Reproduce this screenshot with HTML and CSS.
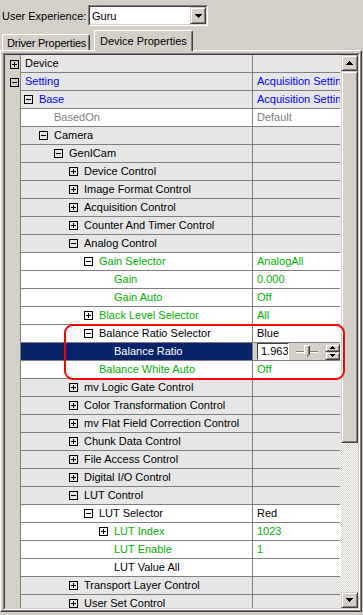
FILE: index.html
```html
<!DOCTYPE html>
<html lang="en">
<head>
    <meta charset="UTF-8">
    <title>Device Properties</title>
    <link rel="stylesheet" href="styles.css">
</head>
<body>
    <div class="toolbar">
        <label>User Experience:</label>
        <div class="combo">
            <div class="combo-inner">
                <span class="combo-text">Guru</span>
                <span class="btn combo-btn"><svg width="7" height="4"><path d="M0 0h7v1H0zM1 1h5v1H1zM2 2h3v1H2zM3 3h1v1H3z"/></svg></span>
            </div>
        </div>
    </div>

    <div class="tabs">
        <div class="tab">Driver Properties</div>
        <div class="tab active">Device Properties</div>
    </div>

    <div class="panel">
        <div class="frame">
            <div class="frame-inner">
                <div class="grid">
                    <div class="row cat"><div class="gutter"><span class="exp plus"></span></div><div class="name l0">Device</div><div class="value"></div></div>
                    <div class="row cat"><div class="gutter"><span class="exp"></span></div><div class="name l0 blue">Setting</div><div class="value blue">Acquisition Setting</div></div>
                    <div class="row cat"><div class="gutter"></div><div class="name l1 blue"><span class="exp"></span>Base</div><div class="value blue">Acquisition Setting</div></div>
                    <div class="row"><div class="gutter"></div><div class="name l2 gray"><span class="leaf"></span>BasedOn</div><div class="value gray">Default</div></div>
                    <div class="row cat"><div class="gutter"></div><div class="name l2"><span class="exp"></span>Camera</div><div class="value"></div></div>
                    <div class="row cat"><div class="gutter"></div><div class="name l3"><span class="exp"></span>GenICam</div><div class="value"></div></div>
                    <div class="row cat"><div class="gutter"></div><div class="name l4"><span class="exp plus"></span>Device Control</div><div class="value"></div></div>
                    <div class="row cat"><div class="gutter"></div><div class="name l4"><span class="exp plus"></span>Image Format Control</div><div class="value"></div></div>
                    <div class="row cat"><div class="gutter"></div><div class="name l4"><span class="exp plus"></span>Acquisition Control</div><div class="value"></div></div>
                    <div class="row cat"><div class="gutter"></div><div class="name l4"><span class="exp plus"></span>Counter And Timer Control</div><div class="value"></div></div>
                    <div class="row cat"><div class="gutter"></div><div class="name l4"><span class="exp"></span>Analog Control</div><div class="value"></div></div>
                    <div class="row"><div class="gutter"></div><div class="name l5 green"><span class="exp"></span>Gain Selector</div><div class="value green">AnalogAll</div></div>
                    <div class="row"><div class="gutter"></div><div class="name l6 green"><span class="leaf"></span>Gain</div><div class="value green">0.000</div></div>
                    <div class="row"><div class="gutter"></div><div class="name l6 green"><span class="leaf"></span>Gain Auto</div><div class="value green">Off</div></div>
                    <div class="row"><div class="gutter"></div><div class="name l5 green"><span class="exp plus"></span>Black Level Selector</div><div class="value green">All</div></div>
                    <div class="row"><div class="gutter"></div><div class="name l5"><span class="exp"></span>Balance Ratio Selector</div><div class="value">Blue</div></div>
                    <div class="row selected"><div class="gutter"></div><div class="name l6"><span class="leaf"></span>Balance Ratio</div>
                        <div class="value editor">
                            <div class="edit"><span class="caret"></span>1.963</div>
                            <svg class="slider" width="22" height="14" viewBox="0 0 22 14">
                                <path d="M0 6h22v1H0z" fill="#808080"/>
                                <path d="M0 7h22v1H0z" fill="#fff"/>
                                <path d="M8 0h6v9l-3 3-3-3z" fill="#d4d0c8"/>
                                <path d="M8 0h6v1H9v8H8z" fill="#fff"/>
                                <path d="M13 1h1v8l-3 3v-1l2-2z" fill="#404040"/>
                                <path d="M12 1h1v8l-2 2v-1l1-1z" fill="#808080"/>
                            </svg>
                            <div class="spin">
                                <span class="btn spin-btn"><svg width="5" height="3"><path d="M2 0h1v1H2zM1 1h3v1H1zM0 2h5v1H0z"/></svg></span>
                                <span class="btn spin-btn"><svg width="5" height="3"><path d="M0 0h5v1H0zM1 1h3v1H1zM2 2h1v1H2z"/></svg></span>
                            </div>
                        </div>
                    </div>
                    <div class="row"><div class="gutter"></div><div class="name l5 green"><span class="leaf"></span>Balance White Auto</div><div class="value green">Off</div></div>
                    <div class="row cat"><div class="gutter"></div><div class="name l4"><span class="exp plus"></span>mv Logic Gate Control</div><div class="value"></div></div>
                    <div class="row cat"><div class="gutter"></div><div class="name l4"><span class="exp plus"></span>Color Transformation Control</div><div class="value"></div></div>
                    <div class="row cat"><div class="gutter"></div><div class="name l4"><span class="exp plus"></span>mv Flat Field Correction Control</div><div class="value"></div></div>
                    <div class="row cat"><div class="gutter"></div><div class="name l4"><span class="exp plus"></span>Chunk Data Control</div><div class="value"></div></div>
                    <div class="row cat"><div class="gutter"></div><div class="name l4"><span class="exp plus"></span>File Access Control</div><div class="value"></div></div>
                    <div class="row cat"><div class="gutter"></div><div class="name l4"><span class="exp plus"></span>Digital I/O Control</div><div class="value"></div></div>
                    <div class="row cat"><div class="gutter"></div><div class="name l4"><span class="exp"></span>LUT Control</div><div class="value"></div></div>
                    <div class="row"><div class="gutter"></div><div class="name l5"><span class="exp"></span>LUT Selector</div><div class="value">Red</div></div>
                    <div class="row"><div class="gutter"></div><div class="name l6 green"><span class="exp plus"></span>LUT Index</div><div class="value green">1023</div></div>
                    <div class="row"><div class="gutter"></div><div class="name l6 green"><span class="leaf"></span>LUT Enable</div><div class="value green">1</div></div>
                    <div class="row"><div class="gutter"></div><div class="name l6"><span class="leaf"></span>LUT Value All</div><div class="value"></div></div>
                    <div class="row cat"><div class="gutter"></div><div class="name l4"><span class="exp plus"></span>Transport Layer Control</div><div class="value"></div></div>
                    <div class="row cat"><div class="gutter"></div><div class="name l4"><span class="exp plus"></span>User Set Control</div><div class="value"></div></div>
                </div>

                <div class="scrollbar">
                    <span class="btn sb-btn"><svg width="7" height="4"><path d="M3 0h1v1H3zM2 1h3v1H2zM1 2h5v1H1zM0 3h7v1H0z"/></svg></span>
                    <span class="btn sb-thumb"></span>
                    <span class="sb-track"></span>
                    <span class="btn sb-btn"><svg width="7" height="4"><path d="M0 0h7v1H0zM1 1h5v1H1zM2 2h3v1H2zM3 3h1v1H3z"/></svg></span>
                </div>

                <!-- highlight drawn over the balance ratio rows -->
                <div class="mark"></div>
            </div>
        </div>
    </div>
</body>
</html>
```

FILE: styles.css
```css
body {
    margin: 0;
    width: 363px;
    height: 615px;
    overflow: hidden;
    background-color: #d4d0c8;
    font-family: "Liberation Sans", Arial, sans-serif;
    font-size: 11px;
    color: #000;
}

/* raised 3d look used by buttons, thumb */
.btn {
    box-sizing: border-box;
    display: flex;
    align-items: center;
    justify-content: center;
    background-color: #d4d0c8;
    border: 1px solid;
    border-color: #d4d0c8 #404040 #404040 #d4d0c8;
    box-shadow: inset 1px 1px #fff, inset -1px -1px #808080;
}

.toolbar {
    display: flex;
    align-items: center;
    height: 21px;
    padding: 5px 0 0 2px;
}
.toolbar label {
    width: 86px;
}
.combo {
    box-sizing: border-box;
    width: 120px;
    height: 21px;
    border: 1px solid;
    border-color: #808080 #fff #fff #808080;
}
.combo-inner {
    box-sizing: border-box;
    height: 100%;
    display: flex;
    align-items: center;
    background-color: #fff;
    border: 1px solid;
    border-color: #404040 #d4d0c8 #d4d0c8 #404040;
}
.combo-text {
    flex: 1;
    padding-left: 2px;
}
.combo-btn {
    width: 16px;
    height: 17px;
}

.tabs {
    position: relative;
    z-index: 1;
    display: flex;
    align-items: flex-end;
    height: 20px;
    margin-top: 4px;
    padding-left: 2px;
}
.tab {
    box-sizing: border-box;
    width: 88px;
    height: 16px;
    padding: 1px 0 0 4px;
    display: flex;
    align-items: center;
    border: 1px solid;
    border-color: #fff #404040 #d4d0c8 #fff;
    border-bottom: none;
    border-radius: 2px 2px 0 0;
    box-shadow: inset -1px 0 #808080;
    white-space: nowrap;
    letter-spacing: -0.2px;
    overflow: hidden;
}
.tab.active {
    width: 99px;
    height: 21px;
    margin-left: 4px;
    margin-bottom: -1px;
    padding: 0 0 1px 5px;
    letter-spacing: 0;
    background-color: #d4d0c8;
}

.panel {
    width: 362px;
    box-sizing: border-box;
    padding: 2px 1px 1px 2px;
    border: 1px solid;
    border-color: #fff #404040 #404040 #fff;
    box-shadow: inset -1px -1px #808080;
}
.frame {
    border: 1px solid;
    border-color: #808080 #fff #fff #808080;
}
.frame-inner {
    position: relative;
    display: flex;
    height: 553px;
    overflow: hidden;
    border: 1px solid;
    border-color: #404040 #d4d0c8 #d4d0c8 #404040;
}

.grid {
    width: 336px;
    overflow: hidden;
}
.row {
    display: flex;
    height: 18px;
    line-height: 17px;
    white-space: nowrap;
    background-color: #fff;
}
.row.cat {
    background-color: #e6e6e6;
}
.gutter {
    width: 16px;
    flex: none;
    padding-left: 5px;
    box-sizing: border-box;
    display: flex;
    align-items: center;
    background-color: #d4d0c8;
    border-right: 1px solid #808080;
    height: 18px;
}
.name,
.value {
    height: 17px;
    box-sizing: content-box;
    overflow: hidden;
    display: flex;
    align-items: center;
    border-bottom: 1px solid #808080;
}
.name {
    width: 231px;
    flex: none;
    border-right: 1px solid #808080;
}
.value {
    width: 83px;
    padding-left: 4px;
    flex: none;
}

.l0 { padding-left: 4px; width: 227px; }
.l1 { padding-left: 3px; width: 228px; }
.l2 { padding-left: 18px; width: 213px; }
.l3 { padding-left: 33px; width: 198px; }
.l4 { padding-left: 48px; width: 183px; }
.l5 { padding-left: 63px; width: 168px; }
.l6 { padding-left: 78px; width: 153px; }

.blue { color: #0000ff; }
.gray { color: #808080; }
.green { color: #00b400; }

/* +/- expander box */
.exp {
    flex: none;
    box-sizing: border-box;
    width: 9px;
    height: 9px;
    margin-right: 6px;
    border: 1px solid #000;
    background: linear-gradient(#000, #000) center / 5px 1px no-repeat;
}
.gutter .exp {
    margin-right: 0;
}
.exp.plus {
    background:
        linear-gradient(#000, #000) center / 5px 1px no-repeat,
        linear-gradient(#000, #000) center / 1px 5px no-repeat;
}
.leaf {
    flex: none;
    width: 15px;
}

.row.selected .name {
    background-color: #0a246a;
    color: #fff;
}
.value.editor {
    background-color: #d4d0c8;
}
.edit {
    box-sizing: border-box;
    width: 32px;
    height: 17px;
    flex: none;
    display: flex;
    align-items: center;
    overflow: hidden;
    background-color: #fff;
    border: 1px solid;
    border-color: #404040 #fff #fff #404040;
    padding-left: 2px;
}
.caret {
    width: 1px;
    height: 13px;
    margin-right: 1px;
    background-color: #000;
}
.slider {
    flex: none;
    margin-left: 7px;
}
.spin {
    flex: none;
    display: flex;
    flex-direction: column;
    margin-left: 7px;
}
.spin-btn {
    width: 15px;
    height: 8px;
}

.scrollbar {
    width: 17px;
    flex: none;
    display: flex;
    flex-direction: column;
}
.sb-btn {
    height: 16px;
    flex: none;
}
.sb-thumb {
    height: 372px;
    flex: none;
}
.sb-track {
    flex: 1;
    background-color: #fff;
    background-image: repeating-conic-gradient(#d4d0c8 0 25%, #fff 0 50%);
    background-size: 2px 2px;
}

.mark {
    position: absolute;
    left: 59px;
    top: 269px;
    width: 281px;
    height: 56px;
    box-sizing: border-box;
    border: 2px solid #ff0000;
    border-radius: 9px;
}
```
